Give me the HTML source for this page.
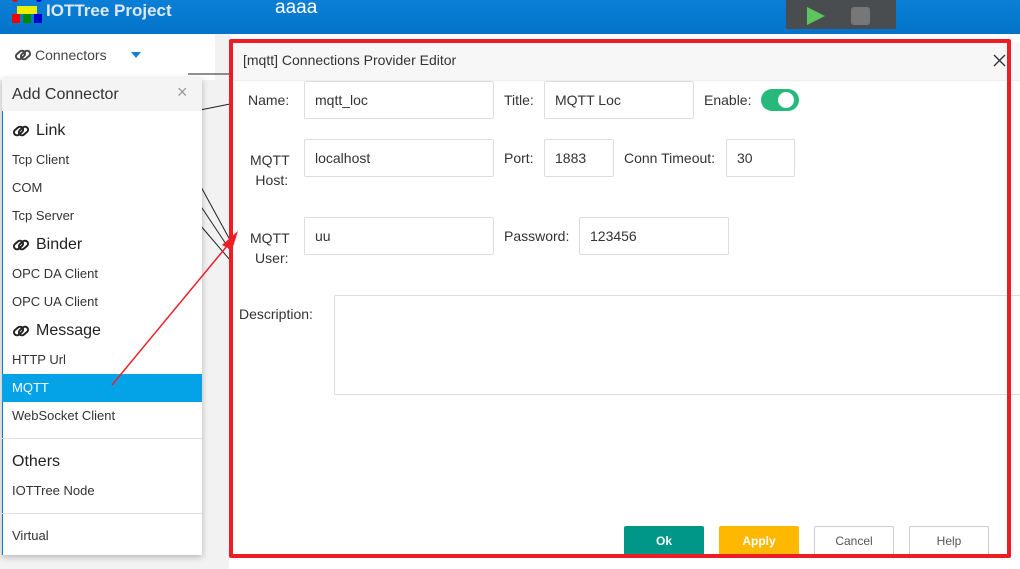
<!DOCTYPE html>
<html><head><style>
*{box-sizing:border-box;margin:0;padding:0}
body{width:1020px;height:569px;overflow:hidden;font-family:"Liberation Sans",Arial,sans-serif;background:#fff;position:relative}
.top{position:absolute;left:0;top:0;width:1020px;height:34px;background:linear-gradient(#0a7fd6,#0473c9)}
.abs{position:absolute}
.lbl{position:absolute;font-size:14px;color:#333}
.inp{position:absolute;border:1px solid #ddd;border-radius:2px;font-size:14px;color:#333;padding:0 10px;display:flex;align-items:center;background:#fff}
.mi{position:absolute;left:12px;font-size:13px;color:#333}
.mh{position:absolute;left:12px;font-size:16px;color:#222;display:flex;align-items:center;gap:4px}
.btn{position:absolute;top:526px;height:30px;width:80px;font-size:12px;display:flex;align-items:center;justify-content:center;border-radius:2px}
</style></head><body>
<svg width="0" height="0" style="position:absolute"><defs><g id="ch"><rect x="1.5" y="6" width="10" height="6" rx="3" transform="rotate(-40 6.5 9)" fill="none" stroke="currentColor" stroke-width="2"/><rect x="6.5" y="6" width="10" height="6" rx="3" transform="rotate(-40 11.5 9)" fill="none" stroke="currentColor" stroke-width="2"/></g></defs></svg>
<div class="top"></div>
<div class="abs" style="left:12px;top:-4px;width:30px;height:32px">
 <div class="abs" style="left:0;top:18px;width:8px;height:9px;background:#e00"></div>
 <div class="abs" style="left:11px;top:18px;width:8px;height:9px;background:#080"></div>
 <div class="abs" style="left:22px;top:18px;width:8px;height:9px;background:#00c"></div>
 <div class="abs" style="left:5px;top:10px;width:20px;height:8px;background:#ee0"></div>
 <div class="abs" style="left:0;top:0;width:6px;height:6px;border-radius:50%;background:#e00"></div>
 <div class="abs" style="left:24px;top:0;width:6px;height:6px;border-radius:50%;background:#00c"></div>
</div>
<div class="abs" style="left:46px;top:1px;font-size:17px;font-weight:bold;color:#dfe9f5">IOTTree Project</div>
<div class="abs" style="left:275px;top:-3px;font-size:19px;color:#fff">aaaa</div>
<div class="abs" style="left:786px;top:0;width:110px;height:29px;background:#4a4d50"></div>
<svg class="abs" style="left:805px;top:5px" width="22" height="22"><path d="M2 2L20 11L2 20Z" fill="#5cc65c"/></svg>
<div class="abs" style="left:851px;top:7px;width:19px;height:18px;border-radius:3px;background:#777"></div>
<div class="abs" style="left:0;top:34px;width:230px;height:535px;background:#f2f2f2"></div>
<div class="abs" style="left:0;top:34px;width:215px;height:46px;background:#fff"></div>
<svg class="abs" style="left:14px;top:46px;color:#444" width="18" height="18"><use href="#ch"/></svg>
<div class="abs" style="left:35px;top:47px;font-size:14px;color:#444">Connectors</div>
<svg class="abs" style="left:131px;top:52px" width="10" height="6"><path d="M0 0H10L5 6Z" fill="#1a7fd1"/></svg>
<svg class="abs" style="left:0;top:0" width="240" height="569"><path d="M188 74H230M200 110L230 104M200 185L230 240M200 205L230 250M200 225L230 260" stroke="#222" stroke-width="1"/></svg>
<div class="abs" style="left:2px;top:78px;width:200px;height:477px;background:#fff;box-shadow:0 2px 6px rgba(0,0,0,.25);border-left:1px solid #0a7fd6"></div>
<div class="abs" style="left:2px;top:78px;width:200px;height:33px;background:#f4f4f4"></div>
<div class="abs" style="left:12px;top:86px;font-size:16px;color:#333">Add Connector</div>
<div class="abs" style="left:177px;top:82px;font-size:18px;color:#999">×</div>
<div class="mh" style="top:122px"><svg width="20" height="18" style="color:#222"><use href="#ch"/></svg><span style="font-weight:500">Link</span></div>
<div class="mi" style="top:152px">Tcp Client</div>
<div class="mi" style="top:180px">COM</div>
<div class="mi" style="top:208px">Tcp Server</div>
<div class="mh" style="top:236px"><svg width="20" height="18" style="color:#222"><use href="#ch"/></svg><span style="font-weight:500">Binder</span></div>
<div class="mi" style="top:266px">OPC DA Client</div>
<div class="mi" style="top:294px">OPC UA Client</div>
<div class="mh" style="top:322px"><svg width="20" height="18" style="color:#222"><use href="#ch"/></svg><span style="font-weight:500">Message</span></div>
<div class="mi" style="top:352px">HTTP Url</div>
<div class="abs" style="left:2px;top:374px;width:200px;height:28px;background:#04a3e7"></div>
<div class="mi" style="top:380px;color:#fff">MQTT</div>
<div class="mi" style="top:408px">WebSocket Client</div>
<div class="abs" style="left:2px;top:438px;width:200px;height:1px;background:#e3e3e3"></div>
<div class="mh" style="top:453px">Others</div>
<div class="mi" style="top:483px">IOTTree Node</div>
<div class="abs" style="left:2px;top:513px;width:200px;height:1px;background:#e3e3e3"></div>
<div class="mi" style="top:528px">Virtual</div>
<div class="abs" style="left:229px;top:39px;width:791px;height:530px;background:#fff"></div>
<div class="abs" style="left:232px;top:42px;width:788px;height:39px;background:#f7f7f7;border-bottom:1px solid #eee"></div>
<div class="abs" style="left:243px;top:52px;font-size:14px;color:#333">[mqtt] Connections Provider Editor</div>
<svg class="abs" style="left:993px;top:54px" width="13" height="13"><path d="M1 1L12 12M12 1L1 12" stroke="#333" stroke-width="1.4"/></svg>
<div class="lbl" style="left:248px;top:92px">Name:</div>
<div class="inp" style="left:304px;top:81px;width:190px;height:38px">mqtt_loc</div>
<div class="lbl" style="left:504px;top:92px">Title:</div>
<div class="inp" style="left:544px;top:81px;width:150px;height:38px">MQTT Loc</div>
<div class="lbl" style="left:704px;top:92px">Enable:</div>
<div class="abs" style="left:761px;top:89px;width:38px;height:22px;border-radius:11px;background:#27b97b"></div>
<div class="abs" style="left:778px;top:92px;width:16px;height:16px;border-radius:50%;background:#fff"></div>
<div class="lbl" style="left:250px;top:150px;text-align:center;line-height:20px">MQTT<br>&nbsp;Host:</div>
<div class="inp" style="left:304px;top:139px;width:190px;height:38px">localhost</div>
<div class="lbl" style="left:504px;top:150px">Port:</div>
<div class="inp" style="left:544px;top:139px;width:70px;height:38px">1883</div>
<div class="lbl" style="left:624px;top:150px">Conn Timeout:</div>
<div class="inp" style="left:726px;top:139px;width:69px;height:38px">30</div>
<div class="lbl" style="left:250px;top:228px;text-align:center;line-height:20px">MQTT<br>&nbsp;User:</div>
<div class="inp" style="left:304px;top:217px;width:190px;height:38px">uu</div>
<div class="lbl" style="left:504px;top:228px">Password:</div>
<div class="inp" style="left:579px;top:217px;width:150px;height:38px">123456</div>
<div class="lbl" style="left:239px;top:306px">Description:</div>
<div class="inp" style="left:334px;top:295px;width:700px;height:100px"></div>
<div class="btn" style="left:624px;background:#009688;color:#fff;font-weight:bold">Ok</div>
<div class="btn" style="left:719px;background:#ffb800;color:#fff;font-weight:bold">Apply</div>
<div class="btn" style="left:814px;border:1px solid #ccc;color:#555">Cancel</div>
<div class="btn" style="left:909px;border:1px solid #ccc;color:#555">Help</div>
<div class="abs" style="left:229px;top:39px;width:782px;height:519px;border:4px solid #ee1c25;border-radius:2px"></div>
<svg class="abs" style="left:0;top:0" width="260" height="569"><path d="M112 385L232 240" stroke="#ee1c25" stroke-width="1.5"/><path d="M238 231L222 245L232 250Z" fill="#ee1c25"/></svg>
</body></html>
